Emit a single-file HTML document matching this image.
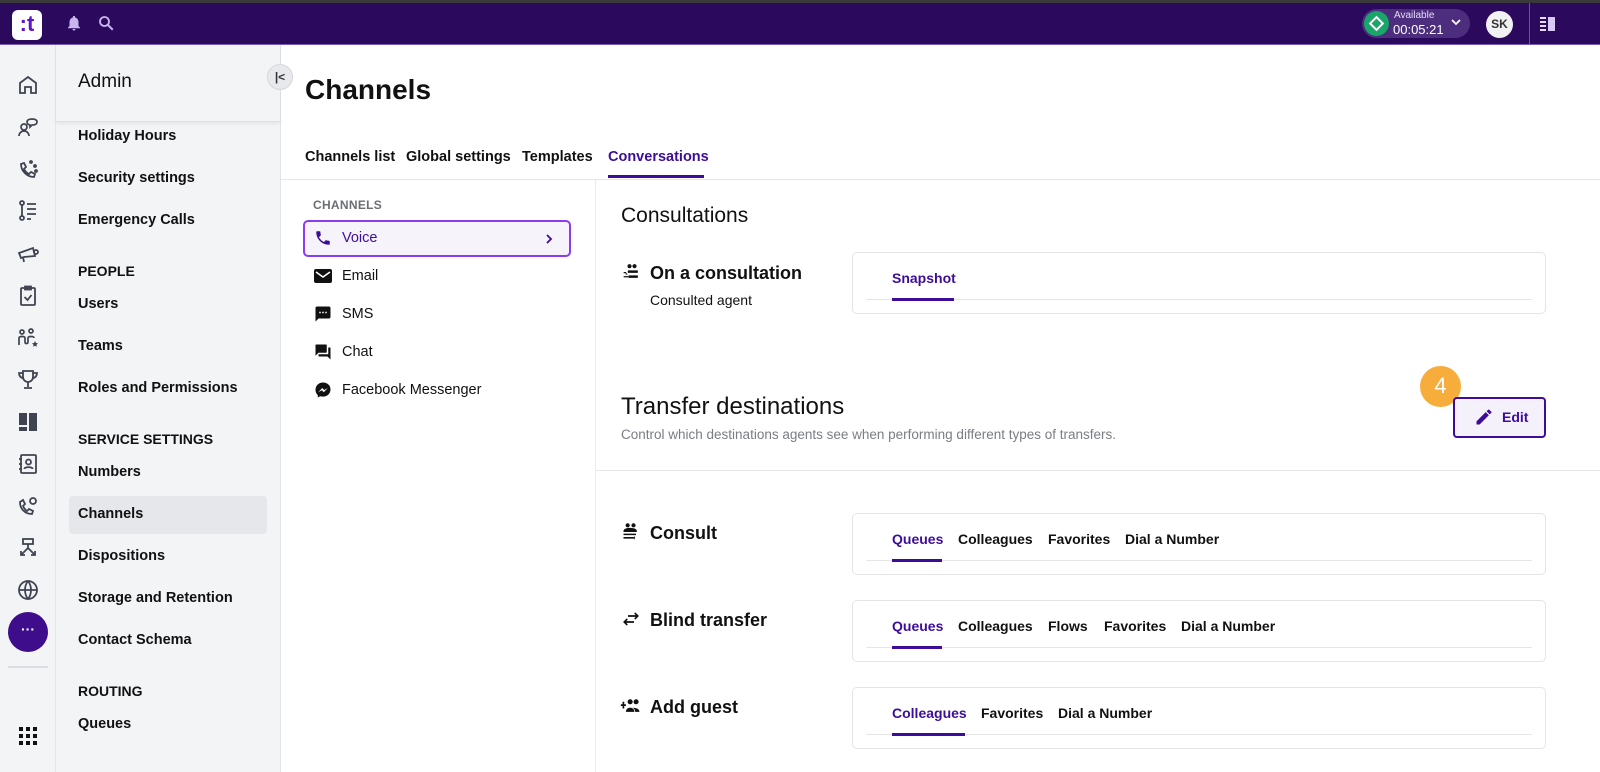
<!DOCTYPE html>
<html><head><meta charset="utf-8"><style>
*{box-sizing:border-box;margin:0;padding:0}
body{width:1600px;height:772px;overflow:hidden;background:#fff;font-family:"Liberation Sans",sans-serif;color:#111;position:relative}
.a{position:absolute}
.top{left:0;top:0;width:1600px;height:45px;background:#2b0a5e;border-top:3px solid #3a3a3a;border-bottom:1px solid #7a5cb8}
.rail{left:0;top:45px;width:56px;height:727px;background:#f3f4f6;border-right:1px solid #e5e6e9}
.sub{left:56px;top:45px;width:225px;height:727px;background:#f3f4f6;border-right:1px solid #e2e3e6}
.sub .it{position:absolute;left:22px;font-size:14.5px;font-weight:bold;color:#111}
.sub .hd{position:absolute;left:22px;font-size:14px;font-weight:bold;color:#111}
.ic{position:absolute;left:16px;width:24px;height:24px}
.tab{position:absolute;top:149px;font-size:14.5px;font-weight:bold;color:#111}
.ch{position:absolute;left:342px;font-size:14.5px;color:#111}
.card{position:absolute;left:852px;width:694px;border:1px solid #e4e4e6;border-radius:5px;background:#fff}
.card .ln{position:absolute;left:13px;right:13px;bottom:13px;height:1px;background:#e6e6e8}
.card span{position:absolute;top:17px;font-size:14px;font-weight:bold;color:#111}
.card .on{color:#3d0d99}
.card .ul{position:absolute;bottom:12px;height:3px;background:#3d0d99}
.lbl{position:absolute;left:650px;font-size:18px;font-weight:bold;color:#111}
</style></head><body>
<div class="a top">
 <div class="a" style="left:12px;top:7px;width:30px;height:30px;background:#fff;border-radius:6px;color:#5a16c8;font-weight:bold;font-size:22px;line-height:28px;text-align:center">:t</div>
 <svg class="a" style="left:65px;top:11px" width="18" height="18" viewBox="0 0 24 24"><path fill="#c9b6ee" d="M12 22a2 2 0 0 0 2-2h-4a2 2 0 0 0 2 2zm6-6v-5c0-3-1.6-5.6-4.5-6.3V4a1.5 1.5 0 0 0-3 0v.7C7.6 5.4 6 8 6 11v5l-2 2v1h16v-1z"/></svg>
 <svg class="a" style="left:97px;top:11px" width="18" height="18" viewBox="0 0 24 24"><circle cx="10" cy="10" r="6" fill="none" stroke="#c9b6ee" stroke-width="2.4"/><path d="M14.5 14.5L21 21" stroke="#c9b6ee" stroke-width="2.6"/></svg>
 <div class="a" style="left:1362px;top:6px;width:108px;height:29px;background:#4d2d7e;border-radius:15px"></div>
 <div class="a" style="left:1364px;top:8px;width:25px;height:25px;background:#1aa56a;border-radius:50%"></div>
 <div class="a" style="left:1371px;top:15px;width:11px;height:11px;border:2px solid #fff;transform:rotate(45deg)"></div>
 <div class="a" style="left:1394px;top:7px;font-size:10px;color:#e6dcf7">Available</div>
 <div class="a" style="left:1393px;top:19px;font-size:13px;color:#fff">00:05:21</div>
 <svg class="a" style="left:1450px;top:14px" width="12" height="10" viewBox="0 0 12 10"><path d="M2 3l4 4 4-4" fill="none" stroke="#fff" stroke-width="1.8"/></svg>
 <div class="a" style="left:1486px;top:8px;width:27px;height:27px;background:#f1f1f3;border-radius:50%;font-size:12px;font-weight:bold;color:#333;text-align:center;line-height:27px">SK</div>
 <div class="a" style="left:1529px;top:0;width:1px;height:41px;background:#6a5595"></div>
 <div class="a" style="left:1540px;top:14px;width:6px;height:2px;background:#e6dcf7;box-shadow:0 4px 0 #e6dcf7,0 8px 0 #e6dcf7,0 12px 0 #e6dcf7"></div>
 <div class="a" style="left:1548px;top:14px;width:7px;height:14px;background:#d8c8f4"></div>
</div>
<div class="a rail">
 <svg class="ic" style="top:28px" viewBox="0 0 24 24" fill="none" stroke="#3f4450" stroke-width="1.8"><path d="M4 20V10l8-6 8 6v10h-5v-6H9v6z"/></svg>
 <svg class="ic" style="top:70px" viewBox="0 0 24 24" fill="none" stroke="#3f4450" stroke-width="1.7"><circle cx="8" cy="12" r="3"/><path d="M3 21c0-3 2.5-5 5-5s5 2 5 5M11 7c0-2 2-3 5-3s5 1 5 3-2 3-5 3l-2 2v-2c-2-.5-3-1.5-3-3"/></svg>
 <svg class="ic" style="top:113px" viewBox="0 0 24 24" fill="none" stroke="#3f4450" stroke-width="1.8"><path d="M5 6c0 7 6 13 13 13l1-3-4-2-2 2c-2-1-4-3-5-5l2-2-2-4z"/><circle cx="15" cy="4" r="1" fill="#3f4450"/><circle cx="19" cy="8" r="1" fill="#3f4450"/><circle cx="20" cy="13" r="1" fill="#3f4450"/></svg>
 <svg class="ic" style="top:154px" viewBox="0 0 24 24" fill="none" stroke="#3f4450" stroke-width="1.8"><circle cx="6" cy="4" r="2"/><circle cx="6" cy="19" r="2"/><path d="M6 6v11M11 5h9M11 10h9M11 15h9M11 20h4"/></svg>
 <svg class="ic" style="top:197px" viewBox="0 0 24 24" fill="none" stroke="#3f4450" stroke-width="1.8"><path d="M3 11l3-1 11-4 2 8-11 1-3 1zM7 15l1 5"/><circle cx="20" cy="10" r="2"/></svg>
 <svg class="ic" style="top:239px" viewBox="0 0 24 24" fill="none" stroke="#3f4450" stroke-width="1.8"><rect x="5" y="4" width="14" height="17" rx="1"/><rect x="9" y="2.5" width="6" height="3"/><path d="M8.5 13l3 3 4-5"/></svg>
 <svg class="ic" style="top:281px" viewBox="0 0 24 24" fill="none" stroke="#3f4450" stroke-width="1.7"><circle cx="6" cy="6" r="2"/><circle cx="15" cy="5" r="2"/><path d="M3 19v-7c0-2 6-2 6 0v4c0 2 3 2 3 0v-4c0-2 6-2 6 0"/><path d="M19 15l1 2 2 .3-1.5 1.5.4 2-1.9-1-1.9 1 .4-2L16 17.3l2-.3z" fill="#3f4450" stroke="none"/></svg>
 <svg class="ic" style="top:323px" viewBox="0 0 24 24" fill="none" stroke="#3f4450" stroke-width="1.8"><path d="M7 3h10v6a5 5 0 0 1-10 0zM7 5H3c0 3 2 5 4 5M17 5h4c0 3-2 5-4 5M12 14v5M8 20h8"/></svg>
 <svg class="ic" style="top:365px" viewBox="0 0 24 24" fill="#3f4450"><rect x="3" y="3" width="8" height="12"/><rect x="3" y="17" width="8" height="4"/><rect x="13" y="3" width="8" height="18"/></svg>
 <svg class="ic" style="top:407px" viewBox="0 0 24 24" fill="none" stroke="#3f4450" stroke-width="1.8"><rect x="5" y="3" width="15" height="18" rx="1"/><circle cx="12.5" cy="10" r="2.5"/><path d="M8.5 17c0-2.5 8-2.5 8 0M3 7h3M3 12h3M3 17h3"/></svg>
 <svg class="ic" style="top:449px" viewBox="0 0 24 24" fill="none" stroke="#3f4450" stroke-width="1.8"><path d="M4 8c0 7 5 12 12 12l1-3-4-2-2 2c-2-1-3-3-4-5l2-2-2-4z"/><circle cx="17" cy="7" r="3"/></svg>
 <svg class="ic" style="top:491px" viewBox="0 0 24 24" fill="none" stroke="#3f4450" stroke-width="1.8"><rect x="7" y="3" width="10" height="5"/><path d="M12 8v4M12 12l-7 7M12 12l7 7M5 15v4h4M19 15v4h-4"/></svg>
 <svg class="ic" style="top:533px" viewBox="0 0 24 24" fill="none" stroke="#3f4450" stroke-width="1.8"><circle cx="12" cy="12" r="9"/><path d="M3 12h18M12 3c-4 5-4 13 0 18M12 3c4 5 4 13 0 18"/></svg>
 <div class="a" style="left:8px;top:567px;width:40px;height:40px;background:#3d0d8c;border-radius:50%;color:#fff;text-align:center;line-height:34px;font-size:14px;font-weight:bold">···</div>
 <div class="a" style="left:8px;top:621px;width:40px;height:2px;background:#dcdde0"></div>
 <svg class="a" style="left:19px;top:682px" width="18" height="18" viewBox="0 0 18 18" fill="#111"><rect x="0" y="0" width="4" height="4"/><rect x="7" y="0" width="4" height="4"/><rect x="14" y="0" width="4" height="4"/><rect x="0" y="7" width="4" height="4"/><rect x="7" y="7" width="4" height="4"/><rect x="14" y="7" width="4" height="4"/><rect x="0" y="14" width="4" height="4"/><rect x="7" y="14" width="4" height="4"/><rect x="14" y="14" width="4" height="4"/></svg>
</div>
<div class="a sub">
 <div class="a" style="left:0;top:0;width:224px;height:77px;border-bottom:1px solid #e0e1e4;box-shadow:0 2px 3px rgba(0,0,0,.06)"></div>
 <div class="a" style="left:22px;top:26px;font-size:19px;color:#111">Admin</div>
 <div class="it" style="top:83px">Holiday Hours</div>
 <div class="it" style="top:125px">Security settings</div>
 <div class="it" style="top:167px">Emergency Calls</div>
 <div class="hd" style="top:218px">PEOPLE</div>
 <div class="it" style="top:251px">Users</div>
 <div class="it" style="top:293px">Teams</div>
 <div class="it" style="top:335px">Roles and Permissions</div>
 <div class="hd" style="top:386px">SERVICE SETTINGS</div>
 <div class="it" style="top:419px">Numbers</div>
 <div class="a" style="left:13px;top:451px;width:198px;height:38px;background:#e6e7ea;border-radius:4px"></div>
 <div class="it" style="top:461px">Channels</div>
 <div class="it" style="top:503px">Dispositions</div>
 <div class="it" style="top:545px">Storage and Retention</div>
 <div class="it" style="top:587px">Contact Schema</div>
 <div class="hd" style="top:638px">ROUTING</div>
 <div class="it" style="top:671px">Queues</div>
</div>
<div class="a" style="left:267px;top:64px;width:26px;height:26px;border-radius:50%;background:#e8e9ec;border:1px solid #d6d7da;font-size:12px;text-align:center;line-height:24px;color:#333;font-weight:bold">|&lt;</div>
<div class="a" style="left:305px;top:74px;font-size:28px;font-weight:bold;color:#111">Channels</div>
<div class="tab" style="left:305px">Channels list</div>
<div class="tab" style="left:406px">Global settings</div>
<div class="tab" style="left:522px">Templates</div>
<div class="tab" style="left:608px;color:#3d0d99">Conversations</div>
<div class="a" style="left:608px;top:175px;width:96px;height:3px;background:#3d0d99"></div>
<div class="a" style="left:281px;top:179px;width:1319px;height:1px;background:#e6e6e8"></div>
<div class="a" style="left:595px;top:180px;width:1px;height:592px;background:#ececee"></div>
<div class="a" style="left:313px;top:198px;font-size:12px;font-weight:bold;color:#6b6e75;letter-spacing:.3px">CHANNELS</div>
<div class="a" style="left:303px;top:220px;width:268px;height:37px;border:2px solid #8a3df0;border-radius:5px;background:#f6f3fb"></div>
<svg class="a" style="left:314px;top:229px" width="18" height="18" viewBox="0 0 24 24"><path fill="#3d0d99" d="M6.6 10.8c1.4 2.8 3.8 5.1 6.6 6.6l2.2-2.2c.3-.3.7-.4 1-.2 1.1.4 2.3.6 3.6.6.6 0 1 .4 1 1V20c0 .6-.4 1-1 1C10.6 21 3 13.4 3 4c0-.6.4-1 1-1h3.5c.6 0 1 .4 1 1 0 1.3.2 2.5.6 3.6.1.3 0 .7-.2 1z"/></svg>
<div class="ch" style="top:230px;color:#3d0d99">Voice</div>
<svg class="a" style="left:544px;top:233px" width="10" height="12" viewBox="0 0 10 12"><path d="M3 2l4 4-4 4" fill="none" stroke="#3d0d99" stroke-width="1.8"/></svg>
<svg class="a" style="left:314px;top:268px" width="18" height="16" viewBox="0 0 18 16"><rect x="0" y="1" width="18" height="14" rx="2" fill="#111"/><path d="M2 4l7 5 7-5" fill="none" stroke="#fff" stroke-width="1.6"/></svg>
<div class="ch" style="top:268px">Email</div>
<svg class="a" style="left:314px;top:305px" width="18" height="18" viewBox="0 0 24 24"><path fill="#111" d="M20 2H4c-1.1 0-2 .9-2 2v18l4-4h14c1.1 0 2-.9 2-2V4c0-1.1-.9-2-2-2zM9 11H7V9h2zm4 0h-2V9h2zm4 0h-2V9h2z"/></svg>
<div class="ch" style="top:306px">SMS</div>
<svg class="a" style="left:314px;top:343px" width="18" height="18" viewBox="0 0 24 24"><path fill="#111" d="M21 6h-2v9H6v2c0 .6.4 1 1 1h11l4 4V7c0-.6-.4-1-1-1zm-4 6V3c0-.6-.4-1-1-1H3c-.6 0-1 .4-1 1v14l4-4h10c.6 0 1-.4 1-1z"/></svg>
<div class="ch" style="top:344px">Chat</div>
<svg class="a" style="left:314px;top:381px" width="18" height="18" viewBox="0 0 24 24"><path fill="#111" d="M12 2C6.4 2 2 6.1 2 11.7c0 2.9 1.2 5.5 3.1 7.2V22l3-1.6c1.2.3 2.5.5 3.9.5 5.6 0 10-4.1 10-9.7S17.6 2 12 2zm1 13l-2.5-2.7L5.6 15l5.400-5.7 2.6 2.700L18.400 9.300z"/></svg>
<div class="ch" style="top:382px">Facebook Messenger</div>

<div class="a" style="left:621px;top:204px;font-size:21px;color:#111">Consultations</div>
<svg class="a" style="left:622px;top:262px" width="20" height="20" viewBox="0 0 24 24" fill="#111"><circle cx="9" cy="5" r="2.5"/><circle cx="15" cy="5" r="2.5"/><path d="M7 10h12v3H7zM4 15h3l-2-2zM8 16h11v3H8z"/><path d="M2 12h3v1.5H2zM2 17h6v1.5H2z"/></svg>
<div class="lbl" style="top:263px">On a consultation</div>
<div class="a" style="left:650px;top:292px;font-size:14px;color:#111">Consulted agent</div>
<div class="card" style="top:252px;height:62px"><div class="ln"></div><span class="on" style="left:39px">Snapshot</span><div class="ul" style="left:39px;width:62px"></div></div>

<div class="a" style="left:621px;top:393px;font-size:24px;color:#111">Transfer destinations</div>
<div class="a" style="left:621px;top:427px;font-size:13.5px;color:#7a7d84">Control which destinations agents see when performing different types of transfers.</div>
<div class="a" style="left:1420px;top:366px;width:41px;height:41px;border-radius:50%;background:#f6ad3c;color:#fff;font-size:22px;text-align:center;line-height:40px">4</div>
<div class="a" style="left:1453px;top:397px;width:93px;height:41px;border:2px solid #3d0d99;border-radius:4px;background:#f5f1fb"></div>
<svg class="a" style="left:1474px;top:407px" width="20" height="20" viewBox="0 0 24 24"><path fill="#3d0d99" d="M3 17.25V21h3.75L17.8 9.94l-3.75-3.75zM20.7 7.04a1 1 0 0 0 0-1.41l-2.34-2.34a1 1 0 0 0-1.41 0l-1.83 1.83 3.75 3.75z"/></svg>
<div class="a" style="left:1502px;top:409px;font-size:14px;font-weight:bold;color:#3d0d99">Edit</div>
<div class="a" style="left:596px;top:470px;width:1004px;height:1px;background:#e6e6e8"></div>

<svg class="a" style="left:621px;top:522px" width="20" height="20" viewBox="0 0 24 24" fill="#111"><circle cx="8" cy="4" r="2.5"/><circle cx="15" cy="4" r="2.5"/><path d="M3 11c0-3 4-4 8-4s8 1 8 4v1H3zM3 14h15v1.8H3zM3 18h14l-2-2 2 3-2 3h0l2-2H3z"/></svg>
<div class="lbl" style="top:523px">Consult</div>
<div class="card" style="top:513px;height:62px"><div class="ln"></div><span class="on" style="left:39px">Queues</span><span style="left:105px">Colleagues</span><span style="left:195px">Favorites</span><span style="left:272px">Dial a Number</span><div class="ul" style="left:39px;width:50px"></div></div>

<svg class="a" style="left:622px;top:611px" width="18" height="16" viewBox="0 0 24 20" fill="none" stroke="#111" stroke-width="2.2"><path d="M8 6h13M17 2l4 4-4 4M16 14H3M7 10l-4 4 4 4"/></svg>
<div class="lbl" style="top:610px">Blind transfer</div>
<div class="card" style="top:600px;height:62px"><div class="ln"></div><span class="on" style="left:39px">Queues</span><span style="left:105px">Colleagues</span><span style="left:195px">Flows</span><span style="left:251px">Favorites</span><span style="left:328px">Dial a Number</span><div class="ul" style="left:39px;width:50px"></div></div>

<svg class="a" style="left:620px;top:697px" width="22" height="18" viewBox="0 0 26 20" fill="#111"><path d="M1 8h6v2H1zM3 5h2v8H3z"/><circle cx="12" cy="5" r="3"/><circle cx="19" cy="5" r="3"/><path d="M7 17c0-4 3-5 5-5s5 1 5 5zM15 12c3 0 8 1 8 5h-5c0-2-1-4-3-5z"/></svg>
<div class="lbl" style="top:697px">Add guest</div>
<div class="card" style="top:687px;height:62px"><div class="ln"></div><span class="on" style="left:39px">Colleagues</span><span style="left:128px">Favorites</span><span style="left:205px">Dial a Number</span><div class="ul" style="left:39px;width:73px"></div></div>
</body></html>
